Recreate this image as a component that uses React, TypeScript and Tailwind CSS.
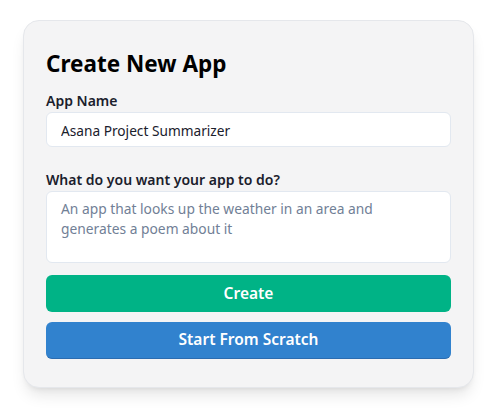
import { useState } from "react";

const App = () => {
  const [name, setName] = useState("Asana Project Summarizer");
  const [description, setDescription] = useState("");

  return (
    <div className="min-h-screen bg-white pl-[23px] pt-5 font-['Noto_Sans',sans-serif]">
      <div className="w-[451px] rounded-2xl border border-[#e5e7eb] bg-[#f4f4f5] px-[22px] pb-7 pt-7 shadow-lg">
        <h1 className="mb-3 text-[22.5px] font-bold leading-[30px] text-black">Create New App</h1>

        <label className="mb-px block text-sm font-semibold text-[#1a202c]">App Name</label>
        <input
          type="text"
          value={name}
          onChange={(e) => setName(e.target.value)}
          className="mb-[23px] block h-[35px] w-full rounded-md border border-[#e2e8f0] bg-white px-[14px] pt-[2px] text-[13.7px] text-[#1a202c] outline-none"
        />

        <label className="mb-px block text-sm font-semibold text-[#1a202c]">What do you want your app to do?</label>
        <textarea
          value={description}
          onChange={(e) => setDescription(e.target.value)}
          placeholder="An app that looks up the weather in an area and generates a poem about it"
          className="mb-3 block h-[72px] w-full resize-none rounded-md border border-[#e2e8f0] bg-white px-[14px] pt-[7px] text-[13.8px] leading-5 text-[#1a202c] outline-none placeholder:text-[#718096]"
        />

        <div className="flex flex-col gap-2.5">
          <button
            type="button"
            className="h-[37px] w-full rounded-md bg-[#00b386] text-[15.5px] font-semibold text-white"
          >
            Create
          </button>
          <button
            type="button"
            className="h-[37px] w-full rounded-md border-b border-[#2b6cb0] bg-[#3182ce] text-[15.5px] font-semibold text-white"
          >
            Start From Scratch
          </button>
        </div>
      </div>
    </div>
  );
};

export default App;
